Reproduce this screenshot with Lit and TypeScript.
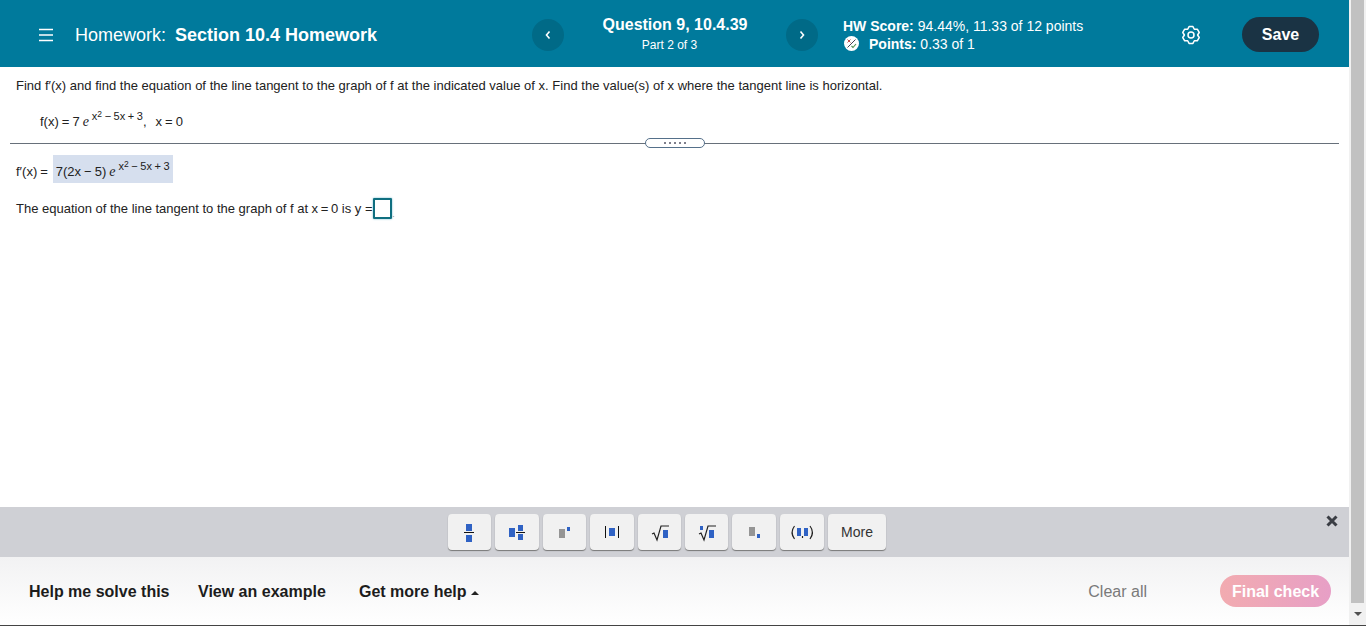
import { LitElement, html, css, svg } from "lit";
import { customElement } from "lit/decorators.js";

const B = "#2f62c4";
const G = "#959595";
const rect = (x: number, y: number, w: number, h: number, c = B) => svg`<rect x=${x} y=${y} width=${w} height=${h} fill=${c}></rect>`;
const line = (d: string) => svg`<path d=${d} fill="none" stroke="#222" stroke-width="1.2"></path>`;

const tools = [
  { w: 43, s: svg`${rect(18, 10, 6, 7)}${rect(16, 18, 10, 1, "#111")}${rect(18, 21, 6, 7)}` },
  { w: 44, s: svg`${rect(14, 14, 6, 9)}${rect(23, 11, 5, 6)}${rect(21, 18, 9, 1, "#111")}${rect(23, 20, 5, 6)}` },
  { w: 43, s: svg`${rect(16, 15, 6, 9, G)}${rect(24, 13, 3, 4)}` },
  { w: 44, s: svg`${rect(15, 12, 1, 12, "#111")}${rect(19, 14, 6, 8)}${rect(28, 12, 1, 12, "#111")}` },
  { w: 43, s: svg`${line("M14 20l2-1 3 7 4-14h8")}${rect(25, 16, 5, 8)}` },
  { w: 43, s: svg`${rect(15, 12, 3, 4)}${line("M14 20l2-1 3 7 4-14h8")}${rect(24, 16, 5, 8)}` },
  { w: 44, s: svg`${rect(17, 13, 6, 9, G)}${rect(25, 20, 3, 4)}` },
  { w: 44, s: svg`${line("M14.500 12c-3 4-3 9 0 13M30 12c3 4 3 9 0 13")}${rect(17, 14, 4, 8)}${rect(24, 14, 4, 8)}${line("M22.500 22v2")}` },
];

// Six-lobed gear outline, pointy at top and bottom.
const gearPath = (() => {
  const pts: string[] = [];
  for (let k = 0; k < 6; k++) {
    const a = -90 + 60 * k;
    for (const [off, r] of [[-13, 8.6], [13, 8.6], [30, 6.6]] as const) {
      const t = ((a + off) * Math.PI) / 180;
      pts.push(`${(10 + r * Math.cos(t)).toFixed(2)} ${(10 + r * Math.sin(t)).toFixed(2)}`);
    }
  }
  return "M" + pts.join("L") + "Z";
})();

@customElement("app-root")
export class AppRoot extends LitElement {
  static styles = css`
    :host { display: flex; flex-direction: column; width: 1366px; height: 626px; overflow: hidden; font-family: "Liberation Sans", Arial, sans-serif; color: #222; background: #fff; }
    .page { display: flex; height: 625px; }
    .rule { height: 1px; background: #444; }
    .main { width: 1349px; display: flex; flex-direction: column; }
    .bar { width: 17px; background: #f1f1f1; display: flex; flex-direction: column; align-items: center; }
    .thumb { width: 13px; height: 603px; background: #c1c1c1; }
    .down { margin-top: 9px; width: 0; height: 0; border: 4px solid transparent; border-top: 4px solid #505050; border-bottom: 0; }

    header { height: 67px; background: #007a9c; color: #fff; display: flex; align-items: center; flex: none; padding-top: 2px; box-sizing: border-box; }
    .left { width: 532px; display: flex; align-items: center; padding-left: 39px; box-sizing: border-box; }
    .menu { width: 14px; height: 14px; margin-right: 22px; display: block; }
    .hw { font-size: 18px; white-space: nowrap; padding-top: 2px; }
    .hw b { margin-left: 9px; }
    .nav { width: 32px; height: 32px; border-radius: 50%; background: #006a87; display: flex; align-items: center; justify-content: center; }
    .q { width: 222px; text-align: center; }
    .q b { display: block; font-size: 16px; line-height: 20px; margin-top: -1px; }
    .q span { display: block; font-size: 12px; line-height: 17px; margin-top: 2px; padding-right: 11px; }
    .score { width: 338px; margin-left: 25px; font-size: 14px; line-height: 18px; }
    .pts { display: flex; align-items: center; gap: 9px; }
    .gear { display: block; width: 20px; height: 20px; }
    .save { margin-left: 41px; width: 77px; height: 35px; border-radius: 18px; background: #1a3344; color: #fff; font-size: 16px; font-weight: bold; display: flex; align-items: center; justify-content: center; }

    .content { flex: 1; padding: 0 10px; font-size: 13px; }
    .stem { padding: 11px 0 0 6px; line-height: 15px; height: 15px; white-space: nowrap; word-spacing: 0.06px; }
    .given { margin-left: 30px; height: 50px; line-height: 20px; display: flex; align-items: baseline; white-space: pre; padding-top: 19px; box-sizing: border-box; word-spacing: -0.6px; }
    .e { font-family: "Liberation Serif", serif; font-style: italic; font-size: 14px; margin-left: 3px; }
    .exp { font-size: 11px; line-height: 0; position: relative; top: -6px; margin-left: 3px; word-spacing: -0.5px; }
    .exp i { font-style: normal; font-size: 8.5px; position: relative; top: -3px; }
    .divider { height: 1px; background: #67707a; position: relative; }
    .handle { position: absolute; left: 635px; top: -5px; width: 58px; height: 8px; border: 1px solid #55708a; border-radius: 5px; background: #fff; display: flex; align-items: center; justify-content: center; gap: 3px; }
    .handle i { width: 2px; height: 2px; border-radius: 50%; background: #556; }
    .deriv { margin: 11px 0 0 6px; display: flex; align-items: baseline; height: 28px; line-height: 20px; white-space: pre; word-spacing: -0.6px; }
    .ans { height: 28px; background: #d6dfee; display: flex; align-items: baseline; padding: 7px 3px 0; box-sizing: border-box; margin-left: 5px; width: 120px; }
    .eqn { margin: 15px 0 0 6px; display: flex; align-items: center; height: 21px; white-space: pre; }
    .tight { word-spacing: -1px; }
    .box { width: 15px; height: 17px; border: 2px solid #0f6f80; margin-left: 1px; border-radius: 1px; box-shadow: 0 0 2px #5fb0c8; }
    .dot { font-size: 7px; align-self: flex-end; line-height: 8px; color: #555; }

    .tools { height: 50px; background: #cfd0d5; display: flex; justify-content: center; gap: 4px; padding: 7px 15px 0 0; box-sizing: border-box; position: relative; flex: none; }
    .tool { height: 36px; background: #f1f1f1; border-radius: 4px; box-shadow: 0 1px 1px #777; display: block; }
    .more { width: 58px; height: 36px; background: #f1f1f1; border-radius: 4px; box-shadow: 0 1px 1px #777; font-size: 14px; display: flex; align-items: center; justify-content: center; color: #333; }
    .x { position: absolute; right: 11px; top: 8px; width: 12px; height: 12px; }

    footer { height: 68px; flex: none; background: linear-gradient(#f2f2f3, #fff); display: flex; align-items: center; padding: 0 18px 0 29px; font-size: 16px; font-weight: bold; color: #1c1c1c; white-space: nowrap; }
    footer span { padding-top: 2px; }
    .l1 { width: 169px; }
    .l2 { width: 161px; }
    .caret { display: inline-block; width: 0; height: 0; border: 4px solid transparent; border-bottom: 4px solid #222; border-top: 0; margin-left: 4px; vertical-align: 2px; }
    .clear { margin-left: auto; font-weight: normal; color: #7a7a7a; }
    .final { margin-left: 73px; width: 111px; height: 32px; padding-top: 1px; box-sizing: border-box; border-radius: 16px; background: linear-gradient(90deg, #f2abb0, #e79fc6); color: #fff; display: flex; align-items: center; justify-content: center; }
  `;

  render() {
    return html`
      <div class="page">
        <div class="main">
          <header>
            <div class="left">
              <svg class="menu" viewBox="0 0 14 14"><path d="M0 1.500h14M0 7h14M0 12.500h14" stroke="#fff" stroke-width="1.600"></path></svg>
              <span class="hw">Homework:<b>Section 10.4 Homework</b></span>
            </div>
            <div class="nav"><svg width="8" height="10" viewBox="0 0 8 10"><path d="M5.500 1.500L2.500 5l3 3.500" fill="none" stroke="#fff" stroke-width="1.600"></path></svg></div>
            <div class="q"><b>Question 9, 10.4.39</b><span>Part 2 of 3</span></div>
            <div class="nav"><svg width="8" height="10" viewBox="0 0 8 10"><path d="M2.500 1.500L5.500 5l-3 3.500" fill="none" stroke="#fff" stroke-width="1.600"></path></svg></div>
            <div class="score">
              <div><b>HW Score:</b> 94.44%, 11.33 of 12 points</div>
              <div class="pts">
                <svg width="17" height="17" viewBox="0 0 17 17"><circle cx="8.500" cy="8.500" r="7.500" fill="#fff"></circle><path d="M4.500 12.500L12.500 4.500" stroke="#445" stroke-width="1"></path><path d="M4.500 4.500l3 3M7.500 4.500l-3 3" stroke="#c0504d" stroke-width="1"></path><path d="M8.500 11l1.500 1.500 3-3.500" fill="none" stroke="#4d8f4d" stroke-width="1.100"></path></svg>
                <span><b>Points:</b> 0.33 of 1</span>
              </div>
            </div>
            <svg class="gear" viewBox="0 0 20 20"><path d=${gearPath} fill="none" stroke="#fff" stroke-width="1.500" stroke-linejoin="round"></path><circle cx="10" cy="10" r="3" fill="none" stroke="#fff" stroke-width="1.500"></circle></svg>
            <div class="save">Save</div>
          </header>
          <div class="content">
            <div class="stem">Find f′(x) and find the equation of the line tangent to the graph of f at the indicated value of x. Find the value(s) of x where the tangent line is horizontal.</div>
            <div class="given">f(x) = 7<span class="e">e</span><span class="exp">x<i>2</i> − 5x + 3</span><span>,   x = 0</span></div>
            <div class="divider"><div class="handle"><i></i><i></i><i></i><i></i><i></i></div></div>
            <div class="deriv">f′(x) =<div class="ans">7(2x − 5)<span class="e">e</span><span class="exp">x<i>2</i> − 5x + 3</span></div></div>
            <div class="eqn"><span>The equation of the line tangent to the graph of f at <span class="tight">x = 0</span> is y =</span><div class="box"></div><span class="dot">.</span></div>
          </div>
          <div class="tools">
            ${tools.map((t) => html`<svg class="tool" width=${t.w} height="36" viewBox="0 0 ${t.w} 36" style="width:${t.w}px">${t.s}</svg>`)}
            <div class="more">More</div>
            <svg class="x" viewBox="0 0 12 12"><path d="M1.500 1.500l9 9M10.500 1.500l-9 9" stroke="#3a3d44" stroke-width="3"></path></svg>
          </div>
          <footer>
            <span class="l1">Help me solve this</span>
            <span class="l2">View an example</span>
            <span>Get more help<i class="caret"></i></span>
            <span class="clear">Clear all</span>
            <div class="final">Final check</div>
          </footer>
        </div>
        <div class="bar"><div class="thumb"></div><div class="down"></div></div>
      </div>
      <div class="rule"></div>
    `;
  }
}
